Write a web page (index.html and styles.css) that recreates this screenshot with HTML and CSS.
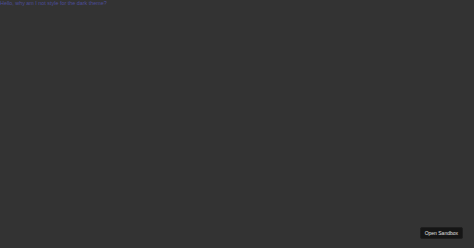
FILE: index.html
```html
<!DOCTYPE html>
<html>
<head>
<meta charset="utf-8">
<link rel="stylesheet" href="styles.css">
</head>
<body>
<div class="page">
  <p class="msg">Hello, why am I not style for the dark theme?</p>
  <div class="footer">
    <a class="open-btn">Open Sandbox</a>
  </div>
</div>
</body>
</html>
```
FILE: styles.css
```css
html, body {
  margin: 0;
  padding: 0;
  height: 100%;
  background: #333333;
}
.page {
  height: 100%;
  display: flex;
  flex-direction: column;
  font-family: "Liberation Sans", Arial, sans-serif;
}
.msg {
  margin: 0;
  font-size: 5.4px;
  line-height: 7px;
  color: #4d4d99;
  flex: 1;
}
.footer {
  display: flex;
  justify-content: flex-end;
  padding: 0 11px 9px 0;
}
.open-btn {
  background: #151515;
  color: #e0e0e0;
  font-size: 5px;
  line-height: 10px;
  padding: 0 4px;
  border-radius: 2px;
  border: 1px solid #1e1e1e;
}
```
